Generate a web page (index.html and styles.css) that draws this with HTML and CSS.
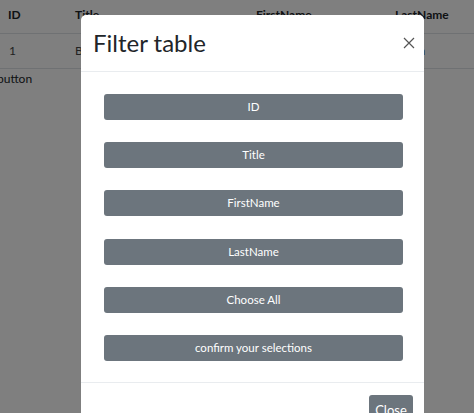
FILE: index.html
```html
<!DOCTYPE html>
<html lang="en">
<head>
<meta charset="utf-8">
<title>Filter table</title>
<link rel="stylesheet" href="styles.css">
</head>
<body>
<div class="page">
  <table class="data">
    <thead>
      <tr>
        <th class="c1">ID</th>
        <th class="c2">Title</th>
        <th class="c3">FirstName</th>
        <th class="c4">LastName</th>
      </tr>
    </thead>
    <tbody>
      <tr>
        <td>1</td>
        <td>Book</td>
        <td>John</td>
        <td>Smith</td>
      </tr>
    </tbody>
  </table>
  <div class="after">button</div>
</div>

<div class="backdrop">
  <div class="modal">
    <div class="modal-header">
      <h1 class="modal-title">Filter table</h1>
      <button class="btn-close" aria-label="Close">
        <svg width="12" height="12" viewBox="0 0 12 12"><path d="M1 1 L11 11 M11 1 L1 11" stroke="#555" stroke-width="1.2" fill="none"/></svg>
      </button>
    </div>
    <div class="modal-body">
      <button class="btn">ID</button>
      <button class="btn">Title</button>
      <button class="btn">FirstName</button>
      <button class="btn">LastName</button>
      <button class="btn">Choose All</button>
      <button class="btn">confirm your selections</button>
    </div>
    <div class="modal-footer">
      <button class="btn btn-small">Close</button>
    </div>
  </div>
</div>
</body>
</html>
```

FILE: styles.css
```css
html, body {
  margin: 0;
  padding: 0;
}
body {
  font-family: "Lato", "Open Sans", sans-serif;
  font-size: 12px;
  color: #212529;
  background: #ffffff;
  width: 474px;
  height: 413px;
  overflow: hidden;
}
.page {
  width: 474px;
}
.data {
  border-collapse: collapse;
  table-layout: fixed;
  width: 520px;
}
.data th, .data td {
  text-align: left;
  padding: 0 0 0 8px;
  line-height: 19px;
  white-space: nowrap;
  overflow: hidden;
}
.data th {
  height: 33px;
  vertical-align: top;
  padding-top: 5px;
  box-sizing: border-box;
  font-weight: 700;
  border-bottom: 1px solid #dee2e6;
}
.data td {
  height: 35px;
  vertical-align: middle;
  box-sizing: border-box;
  border-bottom: 1px solid #dee2e6;
  color: #444;
}
.data tbody td:first-child {
  padding-left: 9px;
}
.c1 { width: 67px; }
.c2 { width: 181px; }
.c3 { width: 139px; }
.after {
  margin-left: -3px;
  line-height: 19px;
}

.backdrop {
  position: fixed;
  inset: 0;
  background: rgba(0, 0, 0, 0.5);
}
.modal {
  position: absolute;
  left: 81px;
  top: 15px;
  width: 343px;
  background: #ffffff;
  border-radius: 5px;
}
.modal-header {
  display: flex;
  align-items: center;
  justify-content: space-between;
  height: 56px;
  padding: 0 9px 0 12px;
  border-bottom: 1px solid #e9ecef;
}
.modal-title {
  margin: 0;
  font-size: 24px;
  font-weight: 400;
  color: #212529;
  line-height: 30px;
}
.btn-close {
  border: 0;
  background: none;
  padding: 0;
  width: 12px;
  height: 12px;
  display: flex;
}
.modal-body {
  display: flex;
  flex-direction: column;
  gap: 22.2px;
  padding: 22px 21px 21px 23px;
  border-bottom: 1px solid #e9ecef;
}
.btn {
  font-family: inherit;
  font-size: 11.5px;
  color: #ffffff;
  background: #6c757d;
  border: 0;
  border-radius: 3px;
  height: 26px;
  line-height: 26px;
  padding: 0 8px;
  text-align: center;
}
.modal-footer {
  display: flex;
  justify-content: flex-end;
  padding: 12px 11px 12px 12px;
}
.btn-small {
  width: 44px;
  height: 30px;
  font-size: 13px;
  padding: 0;
}
```
